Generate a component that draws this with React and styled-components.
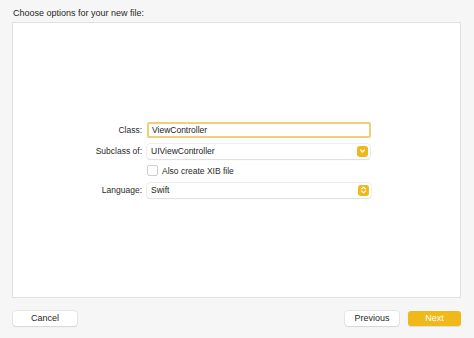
import React from "react";
import styled, { createGlobalStyle } from "styled-components";

const GlobalStyle = createGlobalStyle`
  html, body {
    margin: 0;
    padding: 0;
    background: #f6f6f6;
  }
  body {
    font-family: "Liberation Sans", Arial, sans-serif;
    color: #262626;
  }
`;

const Sheet = styled.div`
  width: 474px;
  height: 338px;
  box-sizing: border-box;
  padding: 6px 13px 0 12px;
  display: flex;
  flex-direction: column;
`;

const Heading = styled.div`
  font-size: 9px;
  line-height: 14px;
  margin-left: 1px;
  margin-bottom: 2px;
  color: #262626;
`;

const Panel = styled.div`
  height: 276px;
  box-sizing: border-box;
  background: #ffffff;
  border: 1px solid #e1e1e1;
  display: flex;
  align-items: center;
  justify-content: flex-start;
  padding-left: 49px;
  padding-bottom: 1px;
`;

const Form = styled.div`
  display: grid;
  grid-template-columns: 80px 224px;
  grid-template-rows: 16px 15px 12px 15px;
  column-gap: 5px;
  row-gap: 6px;
  align-items: center;
`;

const Label = styled.div`
  font-size: 8.5px;
  text-align: right;
  color: #2a2a2a;
`;

const TextField = styled.div`
  height: 16px;
  box-sizing: border-box;
  border: 2px solid #f1cf78;
  border-radius: 2px;
  background: #fff;
  font-size: 8.5px;
  line-height: 12px;
  padding-left: 3px;
  color: #222;
`;

const Popup = styled.div`
  height: 15px;
  width: ${(p) => p.width || "224px"};
  box-sizing: border-box;
  border-radius: 3px;
  background: #fff;
  box-shadow: 0 0 0 0.5px #dcdcdc, 0 1px 1px rgba(0, 0, 0, 0.12);
  font-size: 8.5px;
  line-height: 15px;
  padding-left: 4px;
  display: flex;
  align-items: center;
  justify-content: space-between;
  color: #222;
`;

const Arrow = styled.span`
  width: 11px;
  height: 11px;
  margin-right: 2px;
  border-radius: 3px;
  background: #efb81b;
  display: flex;
  align-items: center;
  justify-content: center;
`;

const CheckRow = styled.div`
  display: flex;
  align-items: center;
  gap: 4px;
  font-size: 8.5px;
  color: #2a2a2a;
  height: 12px;
`;

const Box = styled.span`
  width: 9px;
  height: 9px;
  border: 1px solid #cfcfcf;
  border-radius: 2px;
  background: #fff;
`;

const Footer = styled.div`
  display: flex;
  align-items: center;
  justify-content: space-between;
  padding-top: 13px;
  padding-left: 1px;
`;

const Group = styled.div`
  display: flex;
  gap: 9px;
`;

const Button = styled.div`
  width: ${(p) => p.width};
  height: 15px;
  box-sizing: border-box;
  border-radius: 3px;
  font-size: 9px;
  line-height: 15px;
  text-align: center;
  background: ${(p) => (p.primary ? "#efb81b" : "#fff")};
  color: ${(p) => (p.primary ? "#fff" : "#262626")};
  box-shadow: ${(p) =>
    p.primary
      ? "0 1px 1px rgba(0,0,0,0.1)"
      : "0 0 0 0.5px #d6d6d6, 0 1px 1px rgba(0,0,0,0.12)"};
`;

const Chevron = ({ double }) => (
  <svg width="7" height="8" viewBox="0 0 7 8">
    {double ? (
      <path
        d="M1.5 3 L3.5 1.2 L5.5 3 M1.5 5 L3.5 6.8 L5.5 5"
        fill="none"
        stroke="#fff"
        strokeWidth="1.1"
        strokeLinecap="round"
        strokeLinejoin="round"
      />
    ) : (
      <path
        d="M1.5 3 L3.5 5 L5.5 3"
        fill="none"
        stroke="#fff"
        strokeWidth="1.2"
        strokeLinecap="round"
        strokeLinejoin="round"
      />
    )}
  </svg>
);

export default function App() {
  return (
    <>
      <GlobalStyle />
      <Sheet>
        <Heading>Choose options for your new file:</Heading>
        <Panel>
          <Form>
            <Label>Class:</Label>
            <TextField>ViewController</TextField>
            <Label>Subclass of:</Label>
            <Popup width="223px">
              UIViewController
              <Arrow>
                <Chevron />
              </Arrow>
            </Popup>
            <span />
            <CheckRow>
              <Box />
              Also create XIB file
            </CheckRow>
            <Label>Language:</Label>
            <Popup>
              Swift
              <Arrow>
                <Chevron double />
              </Arrow>
            </Popup>
          </Form>
        </Panel>
        <Footer>
          <Button width="64px">Cancel</Button>
          <Group>
            <Button width="54px">Previous</Button>
            <Button width="53px" primary>
              Next
            </Button>
          </Group>
        </Footer>
      </Sheet>
    </>
  );
}
